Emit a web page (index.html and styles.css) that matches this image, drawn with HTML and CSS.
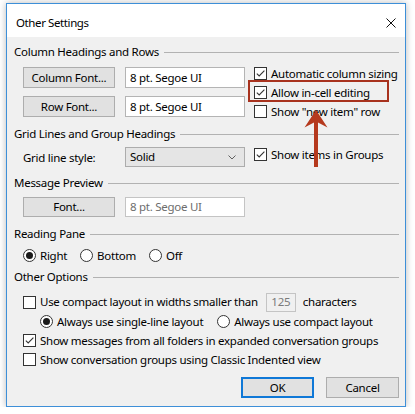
FILE: index.html
```html
<!DOCTYPE html>
<html>
<head>
<meta charset="utf-8">
<link rel="stylesheet" href="styles.css">
</head>
<body>
<div class="window">
  <div class="titlebar">
    <span class="title">Other Settings</span>
    <svg class="close" viewBox="0 0 10 10"><path d="M0.5 0.5 L9.5 9.5 M9.5 0.5 L0.5 9.5" stroke="#111" stroke-width="1" fill="none"/></svg>
  </div>
  <div class="content">
    <div class="hdr h1"><span>Column Headings and Rows</span></div>
    <div class="s1">
      <div class="fontcol">
        <div class="frow"><div class="btn fbtn">Column Font...</div><div class="field">8 pt. Segoe UI</div></div>
        <div class="frow"><div class="btn fbtn">Row Font...</div><div class="field">8 pt. Segoe UI</div></div>
      </div>
      <div class="checks">
        <div class="chk"><span class="box"><svg viewBox="0 0 11 11"><path d="M1.8 5.6 L4.2 8 L9.4 2.6" fill="none" stroke="#333" stroke-width="1.1"/></svg></span>Automatic column sizing</div>
        <div class="chk"><span class="box"><svg viewBox="0 0 11 11"><path d="M1.8 5.6 L4.2 8 L9.4 2.6" fill="none" stroke="#333" stroke-width="1.1"/></svg></span>Allow in-cell editing</div>
        <div class="chk"><span class="box"></span>Show "new item" row</div>
      </div>
    </div>

    <div class="hdr h2"><span>Grid Lines and Group Headings</span></div>
    <div class="s2">
      <div class="lbl">Grid line style:</div>
      <div class="select"><span>Solid</span><svg class="chev" viewBox="0 0 8 5"><path d="M0.5 0.5 L4 4 L7.5 0.5" fill="none" stroke="#606060" stroke-width="1"/></svg></div>
      <div class="chk chk-s2"><span class="box"><svg viewBox="0 0 11 11"><path d="M1.8 5.6 L4.2 8 L9.4 2.6" fill="none" stroke="#333" stroke-width="1.1"/></svg></span>Show items in Groups</div>
    </div>

    <div class="hdr h3"><span>Message Preview</span></div>
    <div class="s3">
      <div class="btn fbtn pbtn">Font...</div><div class="field pfield disabled">8 pt. Segoe UI</div>
    </div>

    <div class="hdr h4"><span>Reading Pane</span></div>
    <div class="s4">
      <div class="rad"><span class="radio on"></span>Right</div>
      <div class="rad"><span class="radio"></span>Bottom</div>
      <div class="rad"><span class="radio"></span>Off</div>
    </div>

    <div class="hdr h5"><span>Other Options</span></div>
    <div class="s5">
      <div class="orow o1"><div class="chk"><span class="box"></span>Use compact layout in widths smaller than</div><div class="num">125</div><span class="chars">characters</span></div>
      <div class="orow o2"><div class="rad"><span class="radio on"></span>Always use single-line layout</div><div class="rad"><span class="radio"></span>Always use compact layout</div></div>
      <div class="orow"><div class="chk"><span class="box"><svg viewBox="0 0 11 11"><path d="M1.8 5.6 L4.2 8 L9.4 2.6" fill="none" stroke="#333" stroke-width="1.1"/></svg></span>Show messages from all folders in expanded conversation groups</div></div>
      <div class="orow"><div class="chk"><span class="box"></span>Show conversation groups using Classic Indented view</div></div>
    </div>

    <div class="footer">
      <div class="btn dbtn ok">OK</div>
      <div class="btn dbtn">Cancel</div>
    </div>
  </div>

  <div class="callout"></div>
  <svg class="arrow" viewBox="0 0 26 60"><path d="M13 2 L24.5 19.5 L15 14.5 L15 59 L11 59 L11 14.5 L1.5 19.5 Z" fill="#b5391d"/></svg>
</div>
</body>
</html>
```

FILE: styles.css
```css
* { box-sizing: border-box; }
body {
  margin: 0;
  background: #ffffff;
  font-family: "Noto Sans", "Open Sans", sans-serif;
  font-size: 11.5px;
  letter-spacing: -0.27px;
  color: #000;
  line-height: 1;
}
.window {
  position: relative;
  margin: 3px 0 0 6px;
  width: 400px;
  height: 404px;
  border: 1px solid #3d8fd8;
  background: #f0f0f0;
  box-shadow: 0 0 7px rgba(0, 0, 0, 0.28);
  display: flex;
  flex-direction: column;
}
.titlebar {
  height: 33px;
  background: #fff;
  display: flex;
  align-items: center;
  justify-content: space-between;
  padding: 4px 9px 0 9px;
}
.title { font-size: 11.5px; letter-spacing: -0.4px; }
.close { width: 10px; height: 10px; }
.content {
  flex: 1;
  display: flex;
  flex-direction: column;
  padding: 0 6px 0 7px;
}
.hdr {
  display: flex;
  align-items: center;
  height: 14px;
  gap: 5px;
  white-space: nowrap;
}
.hdr::after {
  content: "";
  flex: 1;
  border-top: 1px solid #b2b2b2;
}
.h1 { margin-top: 8px; }
.h2 { margin-top: 6px; }
.h3 { margin-top: 8px; }
.h4 { margin-top: 10px; }
.h5 { margin-top: 5px; }

.btn {
  background: #e1e1e1;
  border: 1px solid #adadad;
  display: flex;
  align-items: center;
  justify-content: center;
  white-space: nowrap;
}
.field {
  background: #fff;
  border: 1px solid #b4b4b4;
  display: flex;
  align-items: center;
  padding-left: 4px;
  white-space: nowrap;
}
.field.disabled { color: #6d6d6d; border-color: #c4c4c4; }

.s1 { display: flex; }
.fontcol {
  padding: 8px 0 0 9px;
  display: flex;
  flex-direction: column;
  gap: 8px;
}
.frow { display: flex; height: 21px; gap: 10px; }
.fbtn { width: 92px; }
.field { width: 120px; }
.checks {
  padding: 5px 0 0 9px;
  display: flex;
  flex-direction: column;
}
.chk {
  display: flex;
  align-items: center;
  height: 19px;
  gap: 4px;
  white-space: nowrap;
}
.box {
  width: 13px;
  height: 13px;
  border: 1px solid #333;
  background: #fff;
  flex: none;
  display: flex;
}
.box svg { width: 11px; height: 11px; }

.s2 {
  display: flex;
  align-items: flex-start;
  margin-top: 6px;
  padding-left: 9px;
  height: 21px;
}
.lbl { width: 102px; height: 21px; display: flex; align-items: center; }
.select {
  width: 120px;
  height: 20px;
  background: #e5e5e5;
  border: 1px solid #acacac;
  display: flex;
  align-items: center;
  justify-content: space-between;
  padding: 0 8px 0 4px;
}
.chev { width: 8px; height: 5px; }
.chk-s2 { margin: -2px 0 0 9px; }

.s3 {
  display: flex;
  gap: 10px;
  margin-top: 7px;
  padding-left: 9px;
  height: 20px;
}

.s4 {
  display: flex;
  gap: 13px;
  margin-top: 5px;
  padding-left: 9px;
  height: 19px;
}
.rad {
  display: flex;
  align-items: center;
  gap: 4px;
  height: 19px;
  white-space: nowrap;
}
.radio {
  width: 13px;
  height: 13px;
  border-radius: 50%;
  border: 1px solid #333;
  background: #fff;
  flex: none;
  display: flex;
  align-items: center;
  justify-content: center;
}
.radio.on::after {
  content: "";
  width: 7px;
  height: 7px;
  border-radius: 50%;
  background: #1a1a1a;
}

.s5 {
  margin-top: 8px;
  padding-left: 9px;
  display: flex;
  flex-direction: column;
}
.orow { display: flex; align-items: center; height: 19px; }
.o1 { height: 20px; }
.num {
  width: 30px;
  height: 19px;
  margin-left: 8px;
  border: 1px solid #c4c4c4;
  background: #f0f0f0;
  color: #7a7a7a;
  display: flex;
  align-items: center;
  justify-content: center;
}
.chars { margin-left: 7px; }
.o2 { padding-left: 17px; gap: 14px; }

.footer {
  margin-top: auto;
  padding-bottom: 8px;
  display: flex;
  justify-content: flex-end;
  gap: 12px;
}
.dbtn { width: 73px; height: 21px; }
.ok { border: 2px solid #0f78d7; }

.callout {
  position: absolute;
  left: 241px;
  top: 76px;
  width: 141px;
  height: 22px;
  border: 2px solid #a8321e;
}
.arrow {
  position: absolute;
  left: 296px;
  top: 104px;
  width: 26px;
  height: 60px;
}
```
